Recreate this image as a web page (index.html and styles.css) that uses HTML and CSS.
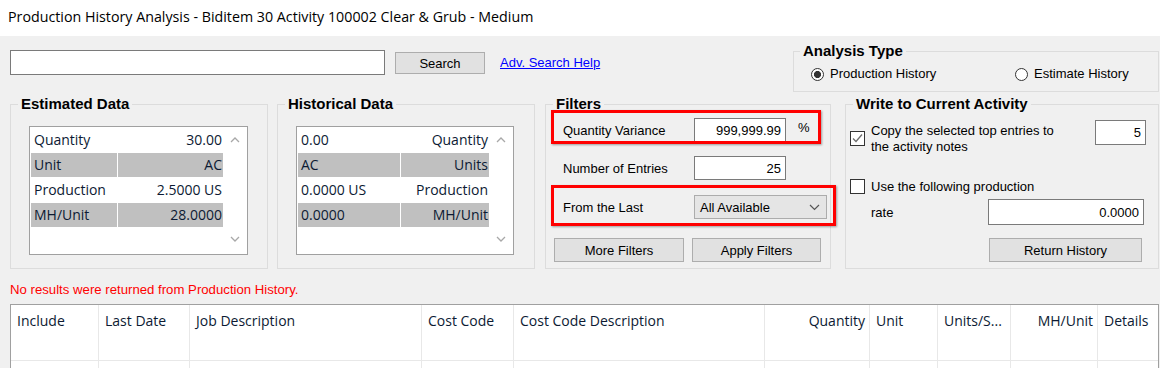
FILE: index.html
```html
<!DOCTYPE html>
<html>
<head>
<meta charset="utf-8">
<link rel="stylesheet" href="styles.css">
</head>
<body>
<div class="titlebar">Production History Analysis - Biditem 30 Activity 100002 Clear &amp; Grub - Medium</div>
<div class="main">
  <div class="toprow">
    <div class="input search-input"></div>
    <div class="btn btn-search">Search</div>
    <a class="link" href="#">Adv. Search Help</a>
    <div class="group analysis">
      <div class="legend">Analysis Type</div>
      <div class="radios">
        <div class="radio r1"><span class="rb on"></span>Production History</div>
        <div class="radio"><span class="rb"></span>Estimate History</div>
      </div>
    </div>
  </div>

  <div class="groups">
    <div class="group g-est">
      <div class="legend">Estimated Data</div>
      <div class="list list-est">
        <div class="cell">Quantity</div><div class="cell r">30.00</div>
        <div class="scroll">
          <svg width="10" height="6" viewBox="0 0 10 6"><polyline points="1,5 5,1 9,5" fill="none" stroke="#a8a8a8" stroke-width="1.3"/></svg>
          <svg width="10" height="6" viewBox="0 0 10 6"><polyline points="1,1 5,5 9,1" fill="none" stroke="#a8a8a8" stroke-width="1.3"/></svg>
        </div>
        <div class="cell alt">Unit</div><div class="cell alt r">AC</div>
        <div class="cell">Production</div><div class="cell r">2.5000 US</div>
        <div class="cell alt">MH/Unit</div><div class="cell alt r">28.0000</div>
        <div class="cell"></div><div class="cell"></div>
      </div>
    </div>

    <div class="group g-hist">
      <div class="legend">Historical Data</div>
      <div class="list list-hist">
        <div class="cell">0.00</div><div class="cell r">Quantity</div>
        <div class="scroll">
          <svg width="10" height="6" viewBox="0 0 10 6"><polyline points="1,5 5,1 9,5" fill="none" stroke="#a8a8a8" stroke-width="1.3"/></svg>
          <svg width="10" height="6" viewBox="0 0 10 6"><polyline points="1,1 5,5 9,1" fill="none" stroke="#a8a8a8" stroke-width="1.3"/></svg>
        </div>
        <div class="cell alt">AC</div><div class="cell alt r">Units</div>
        <div class="cell">0.0000 US</div><div class="cell r">Production</div>
        <div class="cell alt">0.0000</div><div class="cell alt r">MH/Unit</div>
        <div class="cell"></div><div class="cell"></div>
      </div>
    </div>

    <div class="group g-filt">
      <div class="legend">Filters</div>
      <div class="frow f1">
        <div class="lbl">Quantity Variance</div>
        <div class="input num finp">999,999.99</div>
        <div class="pct">%</div>
      </div>
      <div class="frow f2">
        <div class="lbl">Number of Entries</div>
        <div class="input num finp">25</div>
      </div>
      <div class="frow f3">
        <div class="lbl">From the Last</div>
        <div class="combo">All Available
          <svg width="11" height="7" viewBox="0 0 11 7"><polyline points="1,1 5.5,5.5 10,1" fill="none" stroke="#555" stroke-width="1.2"/></svg>
        </div>
      </div>
      <div class="fbtns">
        <div class="btn b-more">More Filters</div>
        <div class="btn b-apply">Apply Filters</div>
      </div>
      <div class="redbox rb1"></div>
      <div class="redbox rb2"></div>
    </div>

    <div class="group g-write">
      <div class="legend">Write to Current Activity</div>
      <div class="wrow-a">
        <div class="chk">
          <svg width="13" height="13" viewBox="0 0 13 13"><polyline points="2,6.5 5,9.5 11,2.5" fill="none" stroke="#6d6d6d" stroke-width="1.3"/></svg>
        </div>
        <div class="ctext">Copy the selected top entries to<br>the activity notes</div>
        <div class="input num inp5">5</div>
      </div>
      <div class="wrow-b">
        <div class="chk"></div>
        <div class="ctext2">Use the following production</div>
      </div>
      <div class="wrow-c">
        <div class="rlbl">rate</div>
        <div class="input num rinp">0.0000</div>
      </div>
      <div class="wrow-d">
        <div class="btn b-ret">Return History</div>
      </div>
    </div>
  </div>

  <div class="msg">No results were returned from Production History.</div>

  <div class="table">
    <div class="thead">
      <div class="th">Include</div>
      <div class="th">Last Date</div>
      <div class="th">Job Description</div>
      <div class="th">Cost Code</div>
      <div class="th">Cost Code Description</div>
      <div class="th r">Quantity</div>
      <div class="th">Unit</div>
      <div class="th">Units/S...</div>
      <div class="th r">MH/Unit</div>
      <div class="th last">Details</div>
    </div>
    <div class="tbody">
      <div class="td"></div><div class="td"></div><div class="td"></div><div class="td"></div><div class="td"></div>
      <div class="td"></div><div class="td"></div><div class="td"></div><div class="td"></div><div class="td last"></div>
    </div>
  </div>
</div>
</body>
</html>
```
FILE: styles.css
```css
* { box-sizing: border-box; }
html, body { margin: 0; padding: 0; }
body {
  width: 1160px;
  height: 368px;
  overflow: hidden;
  background: #f0f0f0;
  font-family: "Liberation Sans", Arial, sans-serif;
  font-size: 13px;
  color: #000;
}

.titlebar {
  height: 36px;
  background: #fff;
  padding-left: 8px;
  font-family: "Open Sans", sans-serif;
  font-size: 14.25px;
  line-height: 34px;
  color: #000;
}

.main {
  background: #f0f0f0;
  padding: 0 1px 0 10px;
  height: 332px;
  overflow: hidden;
}

/* generic controls */
.input {
  background: #fff;
  border: 1px solid #7a7a7a;
}
.input.num {
  text-align: right;
  padding-right: 4px;
  display: flex;
  align-items: center;
  justify-content: flex-end;
}
.btn {
  background: #e1e1e1;
  border: 1px solid #adadad;
  display: flex;
  align-items: center;
  justify-content: center;
  height: 24px;
  color: #000;
}

/* top row */
.toprow {
  display: flex;
  align-items: flex-start;
  height: 56px;
}
.search-input {
  width: 375px;
  height: 25px;
  margin-top: 14px;
}
.btn-search {
  width: 90px;
  height: 22px;
  margin-top: 16px;
  margin-left: 10px;
}
.link {
  margin-left: 15px;
  margin-top: 19px;
  line-height: 16px;
  color: #0000ff;
  text-decoration: underline;
}

/* group boxes */
.group {
  border: 1px solid #dcdcdc;
  position: relative;
  flex-shrink: 0;
}
.legend {
  display: table;
  margin: -10px 0 -8px 7px;
  padding: 0 3px;
  background: #f0f0f0;
  font-weight: bold;
  font-size: 15px;
  line-height: 18px;
}

.analysis {
  margin-left: auto;
  margin-top: 15px;
  width: 366px;
  height: 41px;
}
.analysis .legend { margin-left: 6px; }
.radios {
  display: flex;
  margin-top: 14px;
  padding-left: 17px;
}
.radio {
  display: flex;
  align-items: center;
  line-height: 16px;
}
.radio.r1 { width: 204px; }
.rb {
  width: 13px;
  height: 13px;
  border: 1px solid #333;
  border-radius: 50%;
  background: #fff;
  margin-right: 6px;
}
.rb.on {
  background: radial-gradient(circle, #333 0 3.3px, #fff 3.8px);
}

.groups {
  display: flex;
  margin-top: 12px;
}
.groups .group { height: 165px; }
.g-est { width: 258px; }
.g-hist { width: 258px; margin-left: 9px; }
.g-filt { width: 286px; margin-left: 10px; }
.g-write { width: 314px; margin-left: 14px; }

/* data lists */
.list {
  display: grid;
  grid-template-rows: repeat(5, 24px);
  row-gap: 1px;
  column-gap: 1px;
  padding: 1px 1px 2px 1px;
  background: #fff;
  border: 1px solid #a0a0a0;
  margin: 21px 0 0 18px;
  width: max-content;
  font-family: "Open Sans", sans-serif;
  font-size: 14px;
  color: #0c1a33;
}
.list-est { grid-template-columns: 86px 105px 22px; }
.list-hist { grid-template-columns: 102px 88px 22px; }
.cell {
  line-height: 24px;
  padding: 0 3px;
  white-space: nowrap;
}
.cell.r { text-align: right; padding-right: 1px; }
.cell.alt { background: #c0c0c0; }
.scroll {
  grid-column: 3;
  grid-row: 1 / 6;
  display: flex;
  flex-direction: column;
  justify-content: space-between;
  align-items: center;
  padding: 9px 0 10px 0;
}
.scroll svg { display: block; }

/* filters */
.frow {
  display: flex;
  align-items: center;
  height: 24px;
  padding-left: 17px;
}
.f1 { margin-top: 13px; }
.f2 { margin-top: 14px; }
.f3 { margin-top: 15px; }
.lbl { width: 131px; }
.finp { width: 92px; height: 24px; }
.pct { margin-left: 12px; margin-top: -5px; }
.combo {
  width: 133px;
  height: 24px;
  background: #e5e5e5;
  border: 1px solid #acacac;
  display: flex;
  align-items: center;
  justify-content: space-between;
  padding: 0 6px 0 5px;
}
.fbtns {
  display: flex;
  margin-top: 19px;
  padding-left: 8px;
}
.b-more { width: 130px; }
.b-apply { width: 129px; margin-left: 8px; }
.redbox {
  position: absolute;
  border: 3px solid #ff0000;
  box-shadow: 1px 1px 2px rgba(0, 0, 0, 0.35);
  pointer-events: none;
}
.rb1 { left: 5px; top: 5px; width: 270px; height: 34px; }
.rb2 { left: 5px; top: 80px; width: 285px; height: 41px; }

/* write to current activity */
.chk {
  width: 15px;
  height: 15px;
  border: 1px solid #333;
  background: #fff;
  flex-shrink: 0;
  display: flex;
  align-items: center;
  justify-content: center;
}
.chk svg { display: block; }
.wrow-a {
  display: flex;
  align-items: flex-start;
  margin-top: 15px;
  height: 58px;
  padding-left: 4px;
}
.wrow-a .chk { margin-top: 11px; }
.ctext {
  margin-left: 6px;
  margin-top: 3px;
  line-height: 16px;
}
.inp5 {
  margin-left: auto;
  margin-right: 12px;
  width: 51px;
  height: 25px;
}
.wrow-b {
  display: flex;
  align-items: center;
  height: 17px;
  padding-left: 4px;
}
.ctext2 { margin-left: 6px; line-height: 16px; }
.wrow-c {
  display: flex;
  align-items: center;
  margin-top: 4px;
  height: 26px;
  padding-left: 25px;
}
.rlbl { width: 117px; }
.rinp { width: 156px; height: 26px; }
.wrow-d {
  margin-top: 13px;
  padding-left: 143px;
}
.b-ret { width: 153px; }

/* message + table */
.msg {
  margin-top: 13px;
  line-height: 16px;
  font-size: 13.2px;
  color: #ff0000;
}
.table {
  margin-top: 6px;
  height: 80px;
  background: #fff;
  border: 1px solid #a0a0a0;
  font-family: "Open Sans", sans-serif;
  font-size: 14px;
  color: #0c1a33;
}
.thead, .tbody {
  display: grid;
  grid-template-columns: 88px 91px 232px 92px 251px 105px 68px 73px 87px 1fr;
}
.thead {
  height: 56px;
  border-bottom: 1px solid #e8e8e8;
}
.th {
  border-right: 1px solid #e8e8e8;
  padding: 7px 4px 0 6px;
  line-height: 18px;
  white-space: nowrap;
}
.th.r { text-align: right; padding-right: 4px; }
.th.last, .td.last { border-right: none; }
.tbody { height: 30px; }
.td { border-right: 1px solid #e8e8e8; }
```
